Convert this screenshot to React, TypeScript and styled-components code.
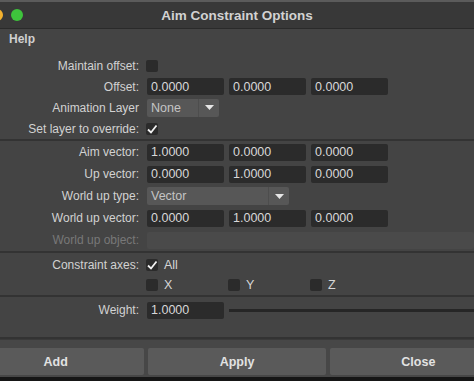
import styled, { createGlobalStyle } from 'styled-components'

const GlobalStyle = createGlobalStyle`
  html, body { margin: 0; padding: 0; background: #444444; }
  body { font-family: "Liberation Sans", Arial, sans-serif; }
`

const Window = styled.div`
  width: 474px;
  height: 381px;
  overflow: hidden;
  background: #444444;
  color: #cfcfcf;
  font-size: 12px;
  display: flex;
  flex-direction: column;
`

const TitleBar = styled.div`
  height: 26px;
  border-top: 2px solid #5b5b5b;
  border-bottom: 1px solid #2a2a2a;
  background: #383838;
  display: grid;
  grid-template-columns: 1fr auto 1fr;
  align-items: center;
`

const Lights = styled.div`
  display: flex;
  gap: 8px;
  margin-left: -9px;
`

const Light = styled.span<{ $color: string }>`
  width: 12px;
  height: 12px;
  border-radius: 50%;
  background: ${p => p.$color};
`

const Title = styled.div`
  font-size: 13.5px;
  font-weight: bold;
  color: #d2d2d2;
`

const MenuBar = styled.div`
  height: 19px;
  display: flex;
  align-items: center;
  padding-left: 9px;
  font-weight: bold;
  color: #d0d0d0;
`

const Section = styled.div<{ $top?: number; $bottom?: number }>`
  padding-top: ${p => p.$top ?? 0}px;
  padding-bottom: ${p => p.$bottom ?? 0}px;
  border-bottom: 2px solid #333333;
`

const Row = styled.div<{ $h?: number }>`
  height: ${p => p.$h ?? 21}px;
  display: grid;
  grid-template-columns: 139px 1fr;
  column-gap: 8px;
  align-items: center;
`

const Label = styled.div<{ $dim?: boolean }>`
  text-align: right;
  white-space: nowrap;
  color: ${p => (p.$dim ? '#787878' : '#d2d2d2')};
`

const Fields = styled.div`
  display: flex;
  gap: 5px;
  align-items: center;
`

const Field = styled.div<{ $wide?: boolean }>`
  width: ${p => (p.$wide ? 'auto' : '73px')};
  flex: ${p => (p.$wide ? '1' : 'none')};
  height: 17px;
  padding-left: 4px;
  background: ${p => (p.$wide ? '#4a4a4a' : '#2b2b2b')};
  border-radius: 2px;
  font-size: 12.5px;
  color: #d8d8d8;
  display: flex;
  align-items: center;
`

const Select = styled.div<{ $w: number }>`
  width: ${p => p.$w}px;
  height: 18px;
  background: #575757;
  border-radius: 2px;
  display: flex;
  align-items: center;
  color: #c4c4c4;
  font-size: 12.5px;
`

const SelectText = styled.span`
  flex: 1;
  padding-left: 4px;
`

const SelectArrow = styled.span`
  width: 20px;
  height: 100%;
  border-left: 1px solid #4d4d4d;
  display: flex;
  align-items: center;
  justify-content: center;
`

const Box = styled.span`
  width: 12px;
  height: 12px;
  background: #2b2b2b;
  border-radius: 2px;
  display: flex;
  align-items: center;
  justify-content: center;
  margin-left: -1px;
`

const Check = styled.label`
  width: 77px;
  display: flex;
  align-items: center;
  gap: 6px;
  font-size: 12.5px;
  color: #d6d6d6;
`

const Slider = styled.div`
  flex: 1;
  height: 3px;
  background: #262626;
  margin-right: -10px;
`

const Footer = styled.div`
  padding-top: 8px;
  padding-bottom: 2px;
  background: #474747;
  border-top: 1px solid #3a3a3a;
`

const Buttons = styled.div`
  display: flex;
  gap: 4px;
  margin-left: -33px;
  width: 540px;
`

const Button = styled.button`
  flex: 1;
  height: 27px;
  background: #5a5a5a;
  border: none;
  border-radius: 2px;
  font-family: inherit;
  font-size: 12.5px;
  font-weight: bold;
  color: #e2e2e2;
`

const Bottom = styled.div`
  flex: 1;
  background: #161616;
`

const Arrow = () => (
  <svg width="9" height="5" viewBox="0 0 9 5">
    <polygon points="0,0 9,0 4.5,5" fill="#e6e6e6" />
  </svg>
)

const CheckBox = ({ on }: { on?: boolean }) => (
  <Box>
    {on && (
      <svg width="12" height="12" viewBox="0 0 12 12">
        <polyline points="2,6.5 5,9.5 10.5,2.5" fill="none" stroke="#f2f2f2" strokeWidth="1.8" />
      </svg>
    )}
  </Box>
)

const Vec = ({ v }: { v: string[] }) => (
  <Fields>
    {v.map((x, i) => (
      <Field key={i}>{x}</Field>
    ))}
  </Fields>
)

export default function App() {
  return (
    <Window>
      <GlobalStyle />
      <TitleBar>
        <Lights>
          <Light $color="#f4b12e" />
          <Light $color="#3ec43c" />
        </Lights>
        <Title>Aim Constraint Options</Title>
        <span />
      </TitleBar>
      <MenuBar>Help</MenuBar>

      <Section $top={7}>
        <Row>
          <Label>Maintain offset:</Label>
          <CheckBox />
        </Row>
        <Row>
          <Label>Offset:</Label>
          <Vec v={['0.0000', '0.0000', '0.0000']} />
        </Row>
        <Row>
          <Label>Animation Layer</Label>
          <Select $w={72}>
            <SelectText>None</SelectText>
            <SelectArrow><Arrow /></SelectArrow>
          </Select>
        </Row>
        <Row>
          <Label>Set layer to override:</Label>
          <CheckBox on />
        </Row>
      </Section>

      <Section>
        <Row $h={22}>
          <Label>Aim vector:</Label>
          <Vec v={['1.0000', '0.0000', '0.0000']} />
        </Row>
        <Row $h={22}>
          <Label>Up vector:</Label>
          <Vec v={['0.0000', '1.0000', '0.0000']} />
        </Row>
        <Row $h={22}>
          <Label>World up type:</Label>
          <Select $w={142}>
            <SelectText>Vector</SelectText>
            <SelectArrow><Arrow /></SelectArrow>
          </Select>
        </Row>
        <Row $h={22}>
          <Label>World up vector:</Label>
          <Vec v={['0.0000', '1.0000', '0.0000']} />
        </Row>
        <Row $h={22}>
          <Label $dim>World up object:</Label>
          <Fields>
            <Field $wide />
          </Fields>
        </Row>
      </Section>

      <Section $top={2} $bottom={1}>
        <Row $h={20}>
          <Label>Constraint axes:</Label>
          <Fields>
            <Check><CheckBox on />All</Check>
          </Fields>
        </Row>
        <Row $h={19}>
          <span />
          <Fields>
            <Check><CheckBox />X</Check>
            <Check><CheckBox />Y</Check>
            <Check><CheckBox />Z</Check>
          </Fields>
        </Row>
      </Section>

      <Section $top={2} $bottom={16}>
        <Row $h={22}>
          <Label>Weight:</Label>
          <Fields>
            <Field>1.0000</Field>
            <Slider />
          </Fields>
        </Row>
      </Section>

      <Footer>
        <Buttons>
          <Button>Add</Button>
          <Button>Apply</Button>
          <Button>Close</Button>
        </Buttons>
      </Footer>
      <Bottom />
    </Window>
  )
}
